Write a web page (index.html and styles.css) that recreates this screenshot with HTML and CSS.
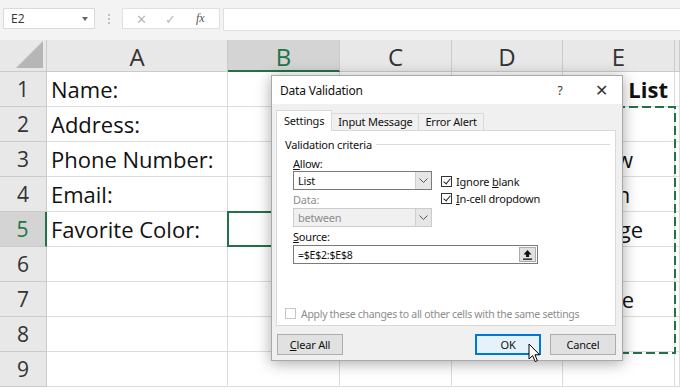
FILE: index.html
```html
<!DOCTYPE html>
<html lang="en">
	<head>
		<meta charset="UTF-8" />
		<title>Data Validation</title>
		<link rel="stylesheet" href="styles.css">
	</head>
	<body>
		<div class="formula-bar">
			<div class="name-box">
				<span>E2</span>
				<span class="caret"></span>
			</div>
			<div class="grip"><i></i><i></i><i></i></div>
			<div class="fx-box">
				<span class="fx-icon">✕</span>
				<span class="fx-icon">✓</span>
				<span class="fx-icon fx">fx</span>
			</div>
			<div class="formula-input"></div>
		</div>

		<div class="sheet">
			<div class="corner"><span class="corner-tri"></span></div>
			<div class="col-head">A</div>
			<div class="col-head sel">B</div>
			<div class="col-head">C</div>
			<div class="col-head">D</div>
			<div class="col-head">E</div>
			<div class="col-head"></div>

			<div class="row-head">1</div>
			<div class="cell">Name:</div><div class="cell"></div><div class="cell"></div><div class="cell"></div><div class="cell bold right">List</div><div class="cell"></div>
			<div class="row-head">2</div>
			<div class="cell">Address:</div><div class="cell"></div><div class="cell"></div><div class="cell"></div><div class="cell"></div><div class="cell"></div>
			<div class="row-head">3</div>
			<div class="cell">Phone Number:</div><div class="cell"></div><div class="cell"></div><div class="cell"></div><div class="cell">Yellow</div><div class="cell"></div>
			<div class="row-head">4</div>
			<div class="cell">Email:</div><div class="cell"></div><div class="cell"></div><div class="cell"></div><div class="cell">Green</div><div class="cell"></div>
			<div class="row-head sel">5</div>
			<div class="cell">Favorite Color:</div><div class="cell active"></div><div class="cell"></div><div class="cell"></div><div class="cell">Orange</div><div class="cell"></div>
			<div class="row-head">6</div>
			<div class="cell"></div><div class="cell"></div><div class="cell"></div><div class="cell"></div><div class="cell"></div><div class="cell"></div>
			<div class="row-head">7</div>
			<div class="cell"></div><div class="cell"></div><div class="cell"></div><div class="cell"></div><div class="cell">Purple</div><div class="cell"></div>
			<div class="row-head">8</div>
			<div class="cell"></div><div class="cell"></div><div class="cell"></div><div class="cell"></div><div class="cell"></div><div class="cell"></div>
			<div class="row-head">9</div>
			<div class="cell"></div><div class="cell"></div><div class="cell"></div><div class="cell"></div><div class="cell"></div><div class="cell"></div>
		</div>

		<!-- copy marquee around E2:E8 -->
		<svg class="marquee" width="114" height="249" viewBox="0 0 114 249">
			<rect x="1" y="1" width="111" height="246" fill="none" stroke="#217346" stroke-width="2" stroke-dasharray="9 4" />
		</svg>

		<div class="dialog">
			<div class="dlg-title">
				<span class="dlg-name">Data Validation</span>
				<span class="dlg-help">?</span>
				<span class="dlg-close">✕</span>
			</div>
			<div class="dlg-body">
				<div class="tabs">
					<div class="tab active">Settings</div>
					<div class="tab">Input Message</div>
					<div class="tab">Error Alert</div>
				</div>
				<div class="panel">
					<div class="group-title"><span>Validation criteria</span></div>
					<div class="criteria">
						<div class="fields">
							<div class="lbl"><u>A</u>llow:</div>
							<div class="combo">
								<span>List</span>
								<span class="combo-btn">
									<svg width="9" height="6" viewBox="0 0 9 6"><polyline points="0.5,0.5 4.5,4.5 8.5,0.5" fill="none" stroke="#555" stroke-width="1" /></svg>
								</span>
							</div>
							<div class="lbl off gap">Data:</div>
							<div class="combo off">
								<span>between</span>
								<span class="combo-btn">
									<svg width="9" height="6" viewBox="0 0 9 6"><polyline points="0.5,0.5 4.5,4.5 8.5,0.5" fill="none" stroke="#555" stroke-width="1" /></svg>
								</span>
							</div>
						</div>
						<div class="checks">
							<div class="check-row"><span class="box on"></span><span>Ignore <u>b</u>lank</span></div>
							<div class="check-row"><span class="box on"></span><span><u>I</u>n-cell dropdown</span></div>
						</div>
					</div>
					<div class="lbl gap src-lbl"><u>S</u>ource:</div>
					<div class="source">
						<span>=$E$2:$E$8</span>
						<span class="pick-btn">
							<svg width="11" height="11" viewBox="0 0 11 11"><path d="M5.5 1 L1.5 5.5 H4 V8 H7 V5.5 H9.5 Z" fill="#111" /><rect x="1" y="9.5" width="9" height="1.3" fill="#111" /></svg>
						</span>
					</div>
					<div class="check-row apply"><span class="box"></span><span>Apply these changes to all other cells with the same settings</span></div>
				</div>
				<div class="buttons">
					<button class="btn"><u>C</u>lear All</button>
					<span class="spacer"></span>
					<button class="btn primary">OK</button>
					<button class="btn">Cancel</button>
				</div>
			</div>
		</div>

		<svg class="cursor" width="13" height="20" viewBox="0 0 13 20">
			<path d="M1 1 V16 L4.6 12.6 L7.2 18.6 L9.4 17.6 L6.9 11.8 H11.6 Z" fill="#fff" stroke="#000" stroke-width="1" stroke-linejoin="round" />
		</svg>
	</body>
</html>
```

FILE: styles.css
```css
body {
	margin: 0;
	width: 680px;
	height: 390px;
	overflow: hidden;
	position: relative;
	background: #ffffff;
	font-family: "Open Sans", "Liberation Sans", sans-serif;
}

/* formula bar */

.formula-bar {
	height: 40px;
	background: #f3f3f3;
	display: flex;
	align-items: flex-start;
	padding: 8px 0 0 3px;
	box-sizing: border-box;
}

.name-box {
	width: 92px;
	height: 21px;
	box-sizing: border-box;
	background: #fff;
	border: 1px solid #dadada;
	display: flex;
	align-items: center;
	justify-content: space-between;
	padding: 0 6px 0 7px;
	font-size: 12px;
	color: #333;
}

.caret {
	width: 0;
	height: 0;
	border-left: 3px solid transparent;
	border-right: 3px solid transparent;
	border-top: 4px solid #666;
}

.grip {
	width: 27px;
	height: 21px;
	display: flex;
	flex-direction: column;
	align-items: center;
	justify-content: center;
	gap: 2px;
}

.grip i {
	width: 2px;
	height: 2px;
	background: #c0c0c0;
}

.fx-box {
	width: 98px;
	height: 21px;
	box-sizing: border-box;
	background: #fff;
	border: 1px solid #e0e0e0;
	display: flex;
	align-items: center;
	justify-content: space-around;
	padding: 0 4px;
}

.fx-icon {
	font-size: 13px;
	color: #b8b8b8;
	width: 20px;
	text-align: center;
}

.fx {
	font-family: "Liberation Serif", serif;
	font-style: italic;
	color: #555;
	font-size: 12px;
}

.formula-input {
	flex: 1;
	height: 21px;
	margin-left: 3px;
	background: #fff;
	border: 1px solid #e0e0e0;
	border-right: none;
}

/* sheet grid */

.sheet {
	display: grid;
	grid-template-columns: 47px 181px 112px 112px 111px 112px 5px;
	grid-template-rows: 32px repeat(9, 35px);
}

.corner,
.col-head,
.row-head {
	background: #e8e8e8;
	color: #333;
	box-sizing: border-box;
	border-right: 1px solid #cbcbcb;
	border-bottom: 1px solid #cbcbcb;
	display: flex;
	align-items: center;
	justify-content: center;
}

.corner {
	position: relative;
}

.corner-tri {
	position: absolute;
	right: 3px;
	bottom: 3px;
	width: 0;
	height: 0;
	border-left: 27px solid transparent;
	border-bottom: 27px solid #b6b6b6;
}

.col-head {
	font-size: 24px;
	padding-top: 2px;
}

.row-head {
	font-size: 21px;
}

.col-head.sel {
	background: #d4d4d4;
	color: #217346;
	border-bottom: 2px solid #217346;
}

.row-head.sel {
	background: #d4d4d4;
	color: #217346;
	border-right: 2px solid #217346;
}

.cell {
	box-sizing: border-box;
	border-right: 1px solid #dcdcdc;
	border-bottom: 1px solid #dcdcdc;
	font-size: 22px;
	color: #111;
	padding-left: 4px;
	white-space: nowrap;
	display: flex;
	align-items: center;
}

.cell.bold {
	font-weight: bold;
}

.cell.right {
	justify-content: flex-end;
	padding: 0 6px 0 0;
}

.cell.active {
	border: 2px solid #217346;
	margin: -1px 0 0 -1px;
}

.marquee {
	position: absolute;
	left: 563px;
	top: 106px;
}

/* dialog */

.dialog {
	position: absolute;
	left: 271px;
	top: 75px;
	width: 352px;
	height: 286px;
	box-sizing: border-box;
	border: 1px solid #a9a9a9;
	background: #f0f0f0;
	box-shadow: 0 2px 14px rgba(0, 0, 0, 0.35);
	font-family: "Noto Sans", "Open Sans", sans-serif;
	font-size: 11px;
	letter-spacing: -0.2px;
	color: #111;
}

.dlg-title {
	height: 28px;
	background: #fff;
	display: flex;
	align-items: center;
	padding-left: 8px;
	font-size: 12px;
}

.dlg-name {
	flex: 1;
}

.dlg-help {
	width: 40px;
	text-align: center;
	font-size: 12px;
	color: #333;
}

.dlg-close {
	width: 42px;
	text-align: center;
	font-size: 16px;
	color: #333;
}

.dlg-body {
	padding: 6px 6px 0 4px;
}

.tabs {
	display: flex;
	align-items: flex-end;
	height: 20px;
	position: relative;
	z-index: 1;
}

.tab {
	height: 17px;
	box-sizing: border-box;
	border: 1px solid #d9d9d9;
	border-bottom: none;
	padding: 0 6px;
	line-height: 16px;
	background: #f0f0f0;
}

.tab + .tab {
	margin-left: -1px;
}

.tab.active {
	height: 21px;
	margin-bottom: -1px;
	background: #fff;
	line-height: 20px;
	padding: 0 7px;
}

.panel {
	width: 340px;
	height: 196px;
	box-sizing: border-box;
	background: #fff;
	border: 1px solid #d9d9d9;
	padding: 0 5px 0 8px;
}

.group-title {
	height: 26px;
	display: flex;
	align-items: center;
	gap: 4px;
}

.group-title::after {
	content: "";
	flex: 1;
	height: 1px;
	background: #dcdcdc;
}

.criteria {
	display: flex;
	padding-left: 8px;
}

.fields {
	width: 139px;
}

.lbl {
	height: 14px;
	line-height: 14px;
}

.lbl.gap {
	margin-top: 3px;
}

.src-lbl {
	margin-left: 8px;
	margin-top: 2px;
}

.off {
	color: #8d8d8d;
}

.combo {
	height: 19px;
	box-sizing: border-box;
	border: 1px solid #7a7a7a;
	background: #fff;
	display: flex;
	align-items: center;
	justify-content: space-between;
	padding-left: 4px;
	margin-top: 0;
}

.combo.off {
	background: #f0f0f0;
	border-color: #cccccc;
	margin-top: 1px;
}

.combo-btn {
	width: 15px;
	height: 17px;
	background: #e6e6e6;
	border-left: 1px solid #cfcfcf;
	display: flex;
	align-items: center;
	justify-content: center;
}

.checks {
	margin: 16px 0 0 9px;
}

.check-row {
	height: 17px;
	display: flex;
	align-items: center;
	gap: 4px;
	white-space: nowrap;
}

.box {
	width: 11px;
	height: 11px;
	flex: none;
	box-sizing: border-box;
	border: 1px solid #333;
	background: #fff;
	position: relative;
}

.box.on::after {
	content: "";
	position: absolute;
	left: 3px;
	top: 0;
	width: 3px;
	height: 6px;
	border-right: 1.2px solid #222;
	border-bottom: 1.2px solid #222;
	transform: rotate(40deg);
}

.source {
	margin: 1px 0 0 8px;
	width: 245px;
	height: 19px;
	box-sizing: border-box;
	border: 1px solid #7a7a7a;
	display: flex;
	align-items: center;
	justify-content: space-between;
	padding-left: 4px;
	font-size: 10.5px;
}

.pick-btn {
	width: 17px;
	height: 15px;
	margin-right: 1px;
	box-sizing: border-box;
	border: 1px solid #adadad;
	background: #e1e1e1;
	display: flex;
	align-items: center;
	justify-content: center;
}

.check-row.apply {
	margin-top: 41px;
	color: #8d8d8d;
	gap: 5px;
	font-size: 10.5px;
	letter-spacing: -0.3px;
}

.apply .box {
	border-color: #c6c6c6;
}

.buttons {
	display: flex;
	margin-top: 8px;
	gap: 9px;
	padding-left: 1px;
}

.spacer {
	flex: 1;
}

.btn {
	width: 66px;
	height: 21px;
	border: 1px solid #adadad;
	background: #e1e1e1;
	font-family: "Noto Sans", "Open Sans", sans-serif;
	font-size: 11px;
	letter-spacing: -0.2px;
	color: #111;
	padding: 0;
}

.btn.primary {
	background: #e5f1fb;
	border: 1px solid #0078d7;
	box-shadow: inset 0 0 0 1px #0078d7;
}

.cursor {
	position: absolute;
	left: 528px;
	top: 343px;
}
```
